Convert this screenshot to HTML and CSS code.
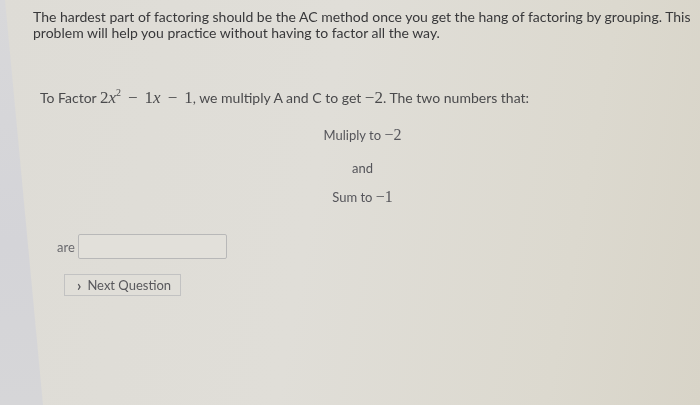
FILE: index.html
```html
<!DOCTYPE html>
<html>
<head>
<meta charset="utf-8">
<link rel="stylesheet" href="styles.css">
</head>
<body>
<div class="edge"></div>
<main class="content">
  <p class="intro">The hardest part of factoring should be the AC method once you get the hang of factoring by grouping. This problem will help you practice without having to factor all the way.</p>
  <p class="problem">To Factor <span class="m">2<i>x</i><sup>2</sup><span class="op">−</span>1<i>x</i><span class="op">−</span>1</span>, we multiply A and C to get <span class="m">−2</span>. The two numbers that:</p>
  <div class="conditions">
    <p class="c1">Muliply to <span class="m">−2</span></p>
    <p class="c2">and</p>
    <p class="c3">Sum to <span class="m">−1</span></p>
  </div>
  <div class="answer">
    <span class="label">are</span>
    <span class="field"></span>
  </div>
  <div class="actions">
    <span class="btn"><span class="chev">›</span> Next Question</span>
  </div>
</main>
</body>
</html>
```
FILE: styles.css
```css
html, body {
  margin: 0;
  height: 100%;
}
body {
  background: linear-gradient(100deg, #dedcd6 0%, #e0ded8 45%, #dcd9cf 80%, #d8d4c8 100%);
  font-family: Lato, "Open Sans", sans-serif;
  overflow: hidden;
  position: relative;
}
.edge {
  position: fixed;
  inset: 0;
  background: linear-gradient(180deg, #d8d8da 0%, #d4d4d8 60%, #d6d6d8 100%);
  clip-path: polygon(0 0, 5px 0, 43px 100%, 0 100%);
  z-index: 0;
}
.content {
  position: relative;
  z-index: 1;
  padding: 9px 8px 0 33px;
}
.intro {
  margin: 0;
  font-size: 14px;
  line-height: 16px;
  color: #38383a;
}
.problem {
  margin: 48px 0 0 7px;
  font-size: 14px;
  line-height: 18px;
  color: #4a4a4c;
}
.problem .m {
  font-size: 17px;
}
.op {
  margin: 0 7px;
}
.m {
  font-family: "Liberation Serif", serif;
  font-size: 16px;
}
.m sup {
  font-size: 10px;
  vertical-align: 7px;
  line-height: 0;
}
.conditions {
  text-align: center;
  font-size: 13px;
  color: #55555a;
}
.conditions p {
  margin: 0;
  line-height: 18px;
}
.conditions .m { word-spacing: 2px; }
.c1 { margin-top: 19px !important; }
.c2 { margin-top: 15px !important; }
.c3 { margin-top: 11px !important; }
.answer {
  display: flex;
  align-items: center;
  gap: 3px;
  margin: 28px 0 0 24px;
}
.label {
  font-size: 13px;
  color: #6a6a6e;
}
.field {
  width: 147px;
  height: 23px;
  border: 1px solid #b8b8b8;
  border-radius: 2px;
  background: #e2e0da;
}
.actions {
  margin: 15px 0 0 31px;
}
.btn {
  display: inline-flex;
  align-items: center;
  gap: 6px;
  width: 115px;
  height: 20px;
  border: 1px solid #c2c2c2;
  font-size: 13px;
  color: #58585c;
  background: #e0ded8;
}
.chev {
  margin-left: 12px;
  font-size: 15px;
  font-weight: bold;
  line-height: 1;
}
```
